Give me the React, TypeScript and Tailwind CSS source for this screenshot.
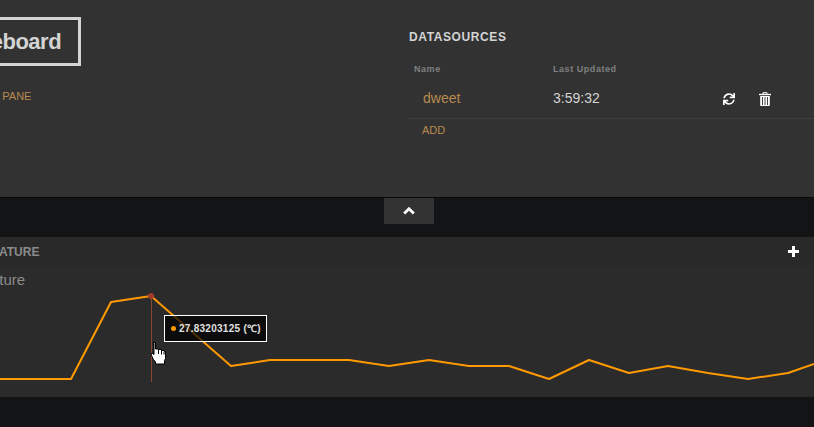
import { FaSync } from "react-icons/fa";

const points =
  "0,379 71,379 111,302 151,296 231,366 270,360 349,360 389,366 429,360 469,366 509,366 549,379 589,360 629,373 668,366 708,373 748,379 788,373 814,364";

function Trash() {
  return (
    <svg width="12" height="14" viewBox="0 0 12 14" fill="none">
      <path d="M0 2.5h12" stroke="#fff" strokeWidth="1.4" />
      <path d="M4 2V0.7h4V2" stroke="#fff" strokeWidth="1" />
      <path d="M1.2 4h9.6v9.2a.8.8 0 0 1-.8.8H2a.8.8 0 0 1-.8-.8z" fill="#fff" />
      <path d="M3.5 5v8M6 5v8M8.5 5v8" stroke="#323232" strokeWidth="0.9" />
    </svg>
  );
}

function Plus() {
  return (
    <svg width="11" height="11" viewBox="0 0 11 11">
      <path d="M4 0h3v4h4v3H7v4H4V7H0V4h4z" fill="#fff" />
    </svg>
  );
}

function ChevronUp() {
  return (
    <svg width="12" height="8" viewBox="0 0 12 8" fill="none">
      <path d="M1.2 6.6L6 1.8l4.8 4.8" stroke="#fff" strokeWidth="2.8" />
    </svg>
  );
}

function HandCursor() {
  return (
    <svg width="18" height="24" viewBox="150 341 18 24" className="absolute left-[150px] top-[75px]">
      <path
        d="M153 342.5h2.5v6.5h3v.5h3v1h3v1h1v7l-1 2v3.5h-9v-2l-2-2.5-1.5-3-1-2.5 1-1 2 1.5v-11z"
        fill="#fff"
        stroke="#000"
        strokeWidth="1"
        strokeLinejoin="miter"
      />
      <path d="M158.5 350v4M161.5 350.5v4M164 351.5v3" stroke="#000" strokeWidth="1" />
    </svg>
  );
}

export default function App() {
  return (
    <div className="w-[814px] h-[427px] overflow-hidden bg-[#131415] font-['Liberation_Sans',Arial,sans-serif]">
      <header className="h-[198px] bg-[#323232] border-b border-[#0a0a0a] flex">
        <div className="w-[409px] shrink-0 pt-[17px]">
          <div className="-ml-[62px] w-fit h-[49px] border-[3px] border-[#d3d4d4] px-[17px] flex items-center text-[22px] font-bold tracking-[-0.5px] text-[#d3d4d4]">
            Freeboard
          </div>
          <div className="mt-[24px] -ml-[24px] text-[11px] leading-[13px] text-[#b88a4e]">ADD PANE</div>
        </div>
        <div className="flex-1 pt-[29px]">
          <h2 className="text-[12px] leading-[16px] font-bold tracking-[0.6px] text-[#d3d4d4]">DATASOURCES</h2>
          <div className="mt-[18px] flex pl-[5px] text-[9px] leading-[12px] font-bold tracking-[0.55px] text-[#7f8080]">
            <span className="w-[139px]">Name</span>
            <span>Last Updated</span>
          </div>
          <div className="h-[44px] pt-[4px] flex items-center border-b border-[#3f3f3f] text-[14px]">
            <span className="w-[144px] pl-[14px] text-[#b88a4e]">dweet</span>
            <span className="w-[170px] text-[#d3d4d4]">3:59:32</span>
            <span className="w-[36px] flex text-white">
              <FaSync size={12} />
            </span>
            <Trash />
          </div>
          <div className="mt-[5px] pl-[13px] text-[11px] leading-[13px] text-[#b88a4e]">ADD</div>
        </div>
      </header>

      <div className="h-[39px] flex">
        <div className="ml-[384px] w-[50px] h-[26px] bg-[#333333] flex items-center justify-center">
          <ChevronUp />
        </div>
      </div>

      <section className="h-[160px] bg-[#2b2b2b]">
        <div className="h-[29px] bg-[#292929] flex items-center justify-between pr-[15px]">
          <span className="-ml-[51px] text-[12px] font-bold text-[#8b8b8b]">TEMPERATURE</span>
          <Plus />
        </div>
        <div className="relative h-[131px]">
          <div className="-ml-[59px] pt-[6px] h-[24px] text-[15px] leading-[16px] text-[#8b8b8b]">Temperature</div>
          <svg width="814" height="107" viewBox="0 290 814 107" className="block">
            <line x1="151.5" y1="296" x2="151.5" y2="382" stroke="#8a4632" strokeWidth="1" />
            <polyline points={points} fill="none" stroke="#ff9900" strokeWidth="2" strokeLinejoin="round" />
            <circle cx="151" cy="296" r="3" fill="#a33d2b" />
          </svg>
          <div className="absolute left-[164px] top-[49px] w-[103px] h-[27px] border border-white bg-black/70 flex items-center pl-[6px] gap-[3px] text-[10px] font-bold tracking-[0.27px] text-[#e0e0e0] whitespace-nowrap">
            <span className="w-[5px] h-[5px] rounded-full bg-[#ff9900]" />
            <span>27.83203125 (℃)</span>
          </div>
          <HandCursor />
        </div>
      </section>
    </div>
  );
}
